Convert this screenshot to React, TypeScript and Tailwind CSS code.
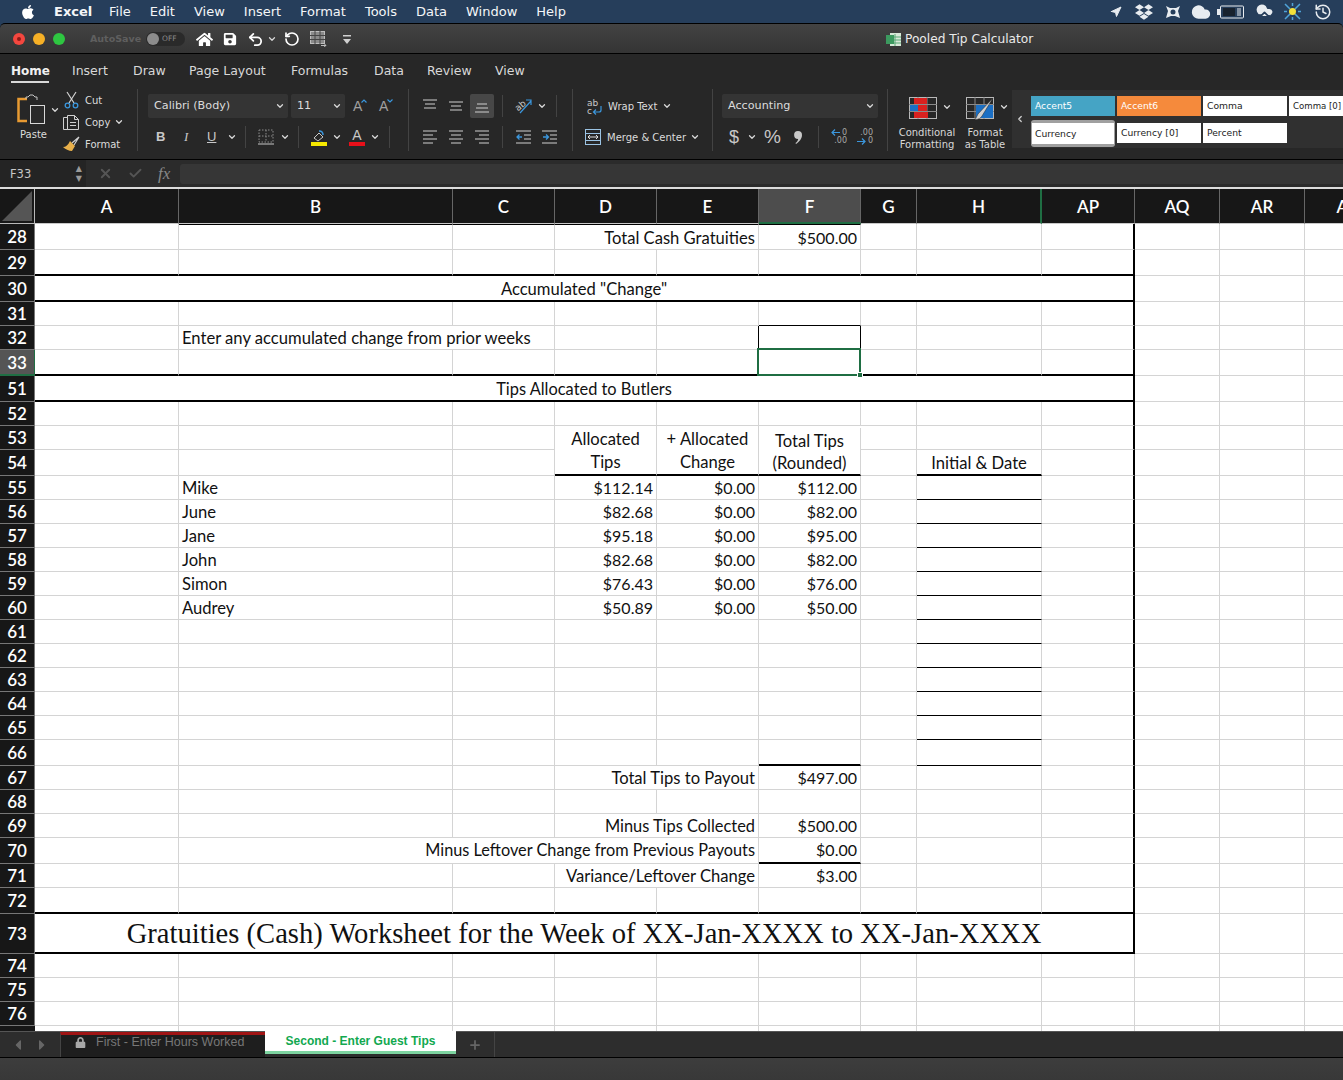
import type { ReactNode } from 'react';
import { twMerge } from 'tailwind-merge';
import { FaApple, FaDropbox, FaHome, FaLock, FaSave, FaCaretLeft, FaCaretRight } from 'react-icons/fa';
import { ChevronDown, ChevronLeft, Plus, Undo2, RotateCcw, X, Check, History, Navigation, Cloud, CloudUpload } from 'lucide-react';

const GRID = 'grid grid-cols-[144px_274px_102px_102px_102px_102px_56px_125px_93px_85px_85px_85px] w-[1390px]';
const LABELS = ['A', 'B', 'C', 'D', 'E', 'F', 'G', 'H', 'AP', 'AQ', 'AR', 'AS'];
const THICK = 'border-b-2 border-b-black';
const THIN = 'border-b border-b-black';
const MONEY = 'justify-end text-[16px] leading-[22px]';

type Cell = { text?: string; span?: number; cls?: string };
type Row = { n: number; h: string; edge?: boolean; cells?: Record<number, Cell> };

const money = (a: string, b: string, c: string, name: string): Record<number, Cell> => ({
  1: { text: name },
  3: { text: a, cls: MONEY },
  4: { text: b, cls: MONEY },
  5: { text: c, cls: MONEY },
  7: { cls: THIN },
});

const rows: Row[] = [
  {
    n: 28, h: 'h-[26px]', cells: {
      1: { cls: 'border-t border-t-black' },
      2: { cls: 'border-t border-t-black' },
      3: { text: 'Total Cash Gratuities', span: 2, cls: 'justify-end border-t border-t-black' },
      5: { text: '$500.00', cls: `${MONEY} border-t border-t-black` },
    },
  },
  { n: 29, h: 'h-[26px]', edge: true },
  { n: 30, h: 'h-[26px]', edge: true, cells: { 0: { text: 'Accumulated "Change"', span: 9, cls: 'justify-center' } } },
  { n: 31, h: 'h-[24px]', cells: { 5: { cls: THIN } } },
  {
    n: 32, h: 'h-[24px]', cells: {
      1: { text: 'Enter any accumulated change from prior weeks', span: 2 },
      4: { cls: 'border-r-black' },
      5: { cls: 'border-r-black' },
    },
  },
  { n: 33, h: 'h-[26px]', edge: true },
  { n: 51, h: 'h-[26px]', edge: true, cells: { 0: { text: 'Tips Allocated to Butlers', span: 9, cls: 'justify-center text-[16.400px] leading-[22px]' } } },
  { n: 52, h: 'h-[24px]' },
  {
    n: 53, h: 'h-[24px]', cells: {
      3: { text: 'Allocated', cls: 'justify-center border-b-0' },
      4: { text: '+ Allocated', cls: 'justify-center border-b-0' },
      5: { text: 'Total Tips', cls: 'justify-center border-b-0 translate-y-[2px]' },
    },
  },
  {
    n: 54, h: 'h-[26px]', cells: {
      3: { text: 'Tips', cls: `justify-center pb-[1px] ${THICK}` },
      4: { text: 'Change', cls: `justify-center pb-[1px] ${THICK}` },
      5: { text: '(Rounded)', cls: `justify-center ${THICK}` },
      7: { text: 'Initial & Date', cls: `justify-center ${THICK}` },
    },
  },
  { n: 55, h: 'h-[24px]', cells: money('$112.14', '$0.00', '$112.00', 'Mike') },
  { n: 56, h: 'h-[24px]', cells: money('$82.68', '$0.00', '$82.00', 'June') },
  { n: 57, h: 'h-[24px]', cells: money('$95.18', '$0.00', '$95.00', 'Jane') },
  { n: 58, h: 'h-[24px]', cells: money('$82.68', '$0.00', '$82.00', 'John') },
  { n: 59, h: 'h-[24px]', cells: money('$76.43', '$0.00', '$76.00', 'Simon') },
  { n: 60, h: 'h-[24px]', cells: money('$50.89', '$0.00', '$50.00', 'Audrey') },
  { n: 61, h: 'h-[24px]', cells: { 7: { cls: THIN } } },
  { n: 62, h: 'h-[24px]', cells: { 7: { cls: THIN } } },
  { n: 63, h: 'h-[24px]', cells: { 7: { cls: THIN } } },
  { n: 64, h: 'h-[24px]', cells: { 7: { cls: THIN } } },
  { n: 65, h: 'h-[24px]', cells: { 7: { cls: THIN } } },
  { n: 66, h: 'h-[26px]', cells: { 5: { cls: THICK }, 7: { cls: THIN } } },
  {
    n: 67, h: 'h-[24px]', cells: {
      3: { text: 'Total Tips to Payout', span: 2, cls: 'justify-end' },
      5: { text: '$497.00', cls: MONEY },
    },
  },
  { n: 68, h: 'h-[24px]' },
  {
    n: 69, h: 'h-[24px]', cells: {
      3: { text: 'Minus Tips Collected', span: 2, cls: 'justify-end text-[16.400px] leading-[22px]' },
      5: { text: '$500.00', cls: MONEY },
    },
  },
  {
    n: 70, h: 'h-[26px]', cells: {
      1: { text: 'Minus Leftover Change from Previous Payouts', span: 4, cls: 'justify-end pb-[2px] text-[16.300px] leading-[22px]' },
      5: { text: '$0.00', cls: `${MONEY} pb-[1px] ${THICK}` },
    },
  },
  {
    n: 71, h: 'h-[24px]', cells: {
      3: { text: 'Variance/Leftover Change', span: 2, cls: 'justify-end' },
      5: { text: '$3.00', cls: MONEY },
    },
  },
  { n: 72, h: 'h-[26px]', edge: true },
  {
    n: 73, h: 'h-[40px]', edge: true, cells: {
      0: {
        text: 'Gratuities (Cash) Worksheet for the Week of XX-Jan-XXXX to XX-Jan-XXXX',
        span: 9,
        cls: "justify-center font-['Liberation_Serif'] text-[28.600px] leading-[36px]",
      },
    },
  },
  { n: 74, h: 'h-[24px]' },
  { n: 75, h: 'h-[24px]' },
  { n: 76, h: 'h-[24px]' },
];

function SheetRow({ row }: { row: Row }) {
  const out = [];
  const active = row.n === 33;
  for (let i = 0; i < 12; i++) {
    const c = row.cells?.[i];
    const span = c?.span ?? 1;
    const last = i + span - 1;
    out.push(
      <div
        key={i}
        className={twMerge(
          "relative flex items-end min-w-0 whitespace-nowrap border-r border-b border-r-[#d4d4d4] border-b-[#d4d4d4] px-[3px] font-['Lato'] text-[16.600px] leading-[22px] text-[#111]",
          span === 2 && 'col-span-2',
          span === 4 && 'col-span-4',
          span === 9 && 'col-span-9',
          row.edge && i < 9 && THICK,
          last === 8 && row.n <= 73 && 'border-r-2 border-r-black',
          c?.cls,
        )}
      >
        <span className={span === 4 ? 'shrink-0' : ''}>{c?.text}</span>
        {/* Selected cell outline with its fill handle */}
        {active && i === 5 && (
          <div className="absolute -left-[2px] -top-[2px] -right-[1px] -bottom-[2px] z-10 border-2 border-[#1f6e43]">
            <div className="absolute -right-[4px] -bottom-[4px] w-[6px] h-[6px] bg-[#1f6e43] border border-white" />
          </div>
        )}
      </div>,
    );
    i = last;
  }
  return (
    <div className={twMerge('flex', row.h)}>
      <div
        className={twMerge(
          "w-[35px] shrink-0 flex items-center justify-center pt-[1px] bg-[#171717] border-b border-r border-b-[#777] border-r-[#777] text-white font-['Lato'] font-semibold text-[17px]",
          active && 'bg-[#555] border-b-2 border-b-[#1f6e43] border-r-[#1f6e43]',
        )}
      >
        {row.n}
      </div>
      <div className={GRID}>{out}</div>
    </div>
  );
}

function Sep({ cls }: { cls?: string }) {
  return <div className={twMerge('w-px bg-[#434343] shrink-0', cls)} />;
}

function Chev({ cls }: { cls?: string }) {
  return <ChevronDown size={10} strokeWidth={3} className={twMerge('text-[#d8d8d8] shrink-0', cls)} />;
}

function Lines({ align, cls }: { align: 'l' | 'c' | 'r'; cls?: string }) {
  const xs: Record<string, string> = {
    l: 'M0 1h14M0 5h10M0 9h14M0 13h10',
    c: 'M0 1h14M2 5h10M0 9h14M2 13h10',
    r: 'M0 1h14M4 5h10M0 9h14M4 13h10',
  };
  return (
    <svg width="14" height="14" viewBox="0 0 14 14" className={cls} fill="none" stroke="#d0d0d0">
      <path d={xs[align]} />
    </svg>
  );
}

function Vert({ pos, cls }: { pos: 't' | 'm' | 'b'; cls?: string }) {
  const d = { t: 'M0 1h14M2 5h10M1 9h12', m: 'M0 3h14M2 7h10M1 11h12', b: 'M2 5h10M1 9h12M0 13h14' }[pos];
  return (
    <svg width="14" height="14" viewBox="0 0 14 14" className={cls} fill="none" stroke="#d0d0d0">
      <path d={d} />
    </svg>
  );
}

function Indent({ flip, cls }: { flip?: boolean; cls?: string }) {
  return (
    <svg width="15" height="14" viewBox="0 0 15 14" className={cls} fill="none">
      <path d="M0 1h15M8 5h7M8 9h7M0 13h15" stroke="#d0d0d0" />
      <path d={flip ? 'M1 7h5M4 4.5L6.5 7 4 9.5' : 'M6 7H1M3.5 4.5L1 7l2.500 2.500'} stroke="#3b97dd" strokeWidth="1.300" />
    </svg>
  );
}

function MenuBar() {
  const items = ['File', 'Edit', 'View', 'Insert', 'Format', 'Tools', 'Data', 'Window', 'Help'];
  return (
    <div className="h-[23px] shrink-0 flex items-center bg-[#263e5b] text-[#f4f6f8] font-['DejaVu_Sans'] text-[13px]">
      <FaApple size={16} className="ml-[20px] text-white" />
      <span className="ml-[18px] font-bold w-[36px]">Excel</span>
      <div className="ml-[19px] flex gap-[19px]">
        {items.map((m) => (
          <span key={m}>{m}</span>
        ))}
      </div>
      <div className="ml-auto flex items-center text-[#e8ecf0]">
        <Navigation size={12} fill="currentColor" />
        <FaDropbox size={18} className="ml-[13px]" />
        <svg width="16" height="16" viewBox="0 0 16 16" className="ml-[12px]" fill="currentColor">
          <path d="M1 2l4 2h6l4-2-2 5 2 7-5-2H6l-5 2 2-7z" />
          <circle cx="8" cy="8" r="2.500" fill="#263e5b" />
        </svg>
        <Cloud size={20} fill="currentColor" className="ml-[10px]" />
        <svg width="27" height="14" viewBox="0 0 27 14" className="ml-[6px]" fill="none">
          <rect x="3.500" y="1" width="23" height="12" rx="1" stroke="currentColor" />
          <rect x="0" y="4" width="3" height="6" fill="currentColor" />
          <rect x="6" y="3" width="12" height="8" fill="#18222e" />
          <path d="M21 3v8M23 3v8" stroke="currentColor" />
        </svg>
        <CloudUpload size={21} fill="currentColor" stroke="#263e5b" className="ml-[10px]" />
        <svg width="17" height="17" viewBox="0 0 17 17" className="ml-[9px]" fill="none">
          <path d="M1 1l5 5M16 1l-5 5M1 16l5-5M16 16l-5-5M8.500 0v3M8.500 14v3M0 8.500h3M14 8.500h3" stroke="#4fa3d8" strokeWidth="1.500" />
          <circle cx="8.500" cy="8.500" r="3.500" fill="#f3e23a" />
        </svg>
        <History size={18} className="ml-[13px] mr-[11px]" />
      </div>
    </div>
  );
}

function TitleBar() {
  return (
    <div className="h-[31px] shrink-0 flex items-center pt-[1px] border-t border-b border-black rounded-t-[5px] bg-gradient-to-b from-[#434343] to-[#343434] font-['DejaVu_Sans']">
      <span className="ml-[13px] w-[12px] h-[12px] rounded-full bg-[#f4473f] flex items-center justify-center">
        <span className="w-[4px] h-[4px] rounded-full bg-[#8e1a16]" />
      </span>
      <span className="ml-[8px] w-[12px] h-[12px] rounded-full bg-[#f6b026]" />
      <span className="ml-[8px] w-[12px] h-[12px] rounded-full bg-[#2ec641]" />
      <span className="ml-[25px] w-[52px] text-[9.500px] font-bold text-[#5f5f5f]">AutoSave</span>
      <span className="ml-[4px] w-[39px] h-[14px] rounded-full bg-[#2a2a2a] flex items-center">
        <span className="ml-[1px] w-[12px] h-[12px] rounded-full bg-[#8c8c8c]" />
        <span className="ml-[3px] text-[7.500px] text-[#8a8a8a]">OFF</span>
      </span>
      <FaHome size={17} className="ml-[11px] text-white" />
      <FaSave size={14} className="ml-[10px] text-white" />
      <Undo2 size={17} strokeWidth={2.500} className="ml-[10px] text-white" />
      <Chev cls="ml-[3px]" />
      <RotateCcw size={16} strokeWidth={2.500} className="ml-[7px] text-white" />
      <svg width="17" height="16" viewBox="0 0 17 16" className="ml-[10px]" fill="none" stroke="#bdbdbd">
        <rect x="0.500" y="0.500" width="14" height="12" fill="#8a8a8a" />
        <path d="M0 4.500h15M0 8.500h15M5 0v13M10 0v13" stroke="#444" />
        <path d="M11 14.500h5M14 12.500l2 2-2 1" />
      </svg>
      <svg width="8" height="9" viewBox="0 0 8 9" className="ml-[16px]" fill="#d0d0d0">
        <rect width="8" height="1.500" />
        <path d="M0 4h8L4 9z" />
      </svg>
      <svg width="15" height="15" viewBox="0 0 15 15" className="ml-[535px]">
        <rect x="4" y="1" width="11" height="13" fill="#d8e8d8" />
        <path d="M5 5h10M5 8h10M5 11h10M9 2v12" stroke="#5aa877" />
        <rect y="3" width="8" height="9" fill="#3c9a5f" />
      </svg>
      <span className="ml-[4px] mt-[1px] text-[12.200px] text-[#eaeaea]">Pooled Tip Calculator</span>
    </div>
  );
}

function ClipboardGroup() {
  return (
    <div className="w-[137px] shrink-0 flex pl-[17px]">
      <div className="w-[46px] shrink-0">
        <div className="flex items-start">
          <svg width="30" height="32" viewBox="0 0 30 32" fill="none" className="mt-[5px]">
            <path d="M10 5H1.500v22H10" stroke="#e89a32" strokeWidth="2.500" />
            <path d="M9 5V3h2l2-2h3l2 2h2v3" stroke="#c4c4c4" />
            <rect x="13.500" y="11.500" width="14" height="18" stroke="#d8d8d8" fill="#2a2a2a" />
          </svg>
          <Chev cls="ml-[3px] mt-[16px]" />
        </div>
        <div className="mt-[1px] ml-[3px] text-[10px] text-[#dcdcdc]">Paste</div>
      </div>
      <div className="flex flex-col text-[10px] text-[#dcdcdc]">
        <div className="h-[22px] shrink-0 flex items-center">
          <svg width="17" height="18" viewBox="0 0 17 18" fill="none">
            <path d="M4 1l7 11M13 1L6 12" stroke="#d0d0d0" strokeWidth="1.200" />
            <circle cx="4.500" cy="14.500" r="2.300" stroke="#3b97dd" strokeWidth="1.300" />
            <circle cx="12.500" cy="14.500" r="2.300" stroke="#3b97dd" strokeWidth="1.300" />
          </svg>
          <span className="ml-[5px]">Cut</span>
        </div>
        <div className="h-[22px] shrink-0 flex items-center">
          <svg width="17" height="17" viewBox="0 0 17 17" fill="none" stroke="#d0d0d0">
            <path d="M5 3.500H.5v12H5" />
            <path d="M4.500 1.500h7l4 4v10h-11zM11.500 1.500v4h4M7 8.500h6M7 11.500h6" fill="#272727" />
          </svg>
          <span className="ml-[5px]">Copy</span>
          <Chev cls="ml-[4px]" />
        </div>
        <div className="h-[22px] shrink-0 flex items-center">
          <svg width="17" height="16" viewBox="0 0 17 16" fill="none">
            <path d="M9 7l7-6M11 9l5-8" stroke="#d0d0d0" strokeWidth="1.200" />
            <path d="M7 5l5 5-3 5c-3 0-7-2-9-4 3 0 5-2 7-6z" fill="#e8b04a" />
          </svg>
          <span className="ml-[5px]">Format</span>
        </div>
      </div>
    </div>
  );
}

function Select({ label, cls }: { label: string; cls: string }) {
  return (
    <div className={twMerge('h-[24px] shrink-0 flex items-center justify-between bg-[#343434] rounded-[2px] pl-[6px] pr-[3px] text-[11.200px] text-[#dcdcdc]', cls)}>
      <span className="pt-[1px]">{label}</span>
      <Chev />
    </div>
  );
}

function GrowA({ up, cls }: { up?: boolean; cls?: string }) {
  return (
    <span className={twMerge("w-[14px] flex items-start font-['Liberation_Sans'] text-[14px] leading-[16px] text-[#a0a0a0]", cls)}>
      A
      <svg width="6" height="4" viewBox="0 0 6 4" fill="none" className="mt-[1px] -ml-[1px] shrink-0">
        <path d={up ? 'M.5 3.500L3 1l2.500 2.500' : 'M.5.5L3 3 5.500.5'} stroke="#3b97dd" strokeWidth="1.200" />
      </svg>
    </span>
  );
}

function FontGroup() {
  return (
    <div className="w-[270px] shrink-0 pl-[10px] pt-[5px]">
      <div className="flex items-center">
        <Select label="Calibri (Body)" cls="w-[140px]" />
        <Select label="11" cls="ml-[3px] w-[54px]" />
        <GrowA up cls="ml-[8px]" />
        <GrowA cls="ml-[12px]" />
      </div>
      <div className="mt-[4px] h-[30px] flex items-center text-[#c8c8c8] text-[13px]">
        <span className="ml-[8px] w-[10px] font-bold font-['Liberation_Sans']">B</span>
        <span className="ml-[18px] w-[6px] italic font-['Liberation_Serif']">I</span>
        <span className="ml-[17px] w-[11px] underline font-['Liberation_Sans']">U</span>
        <Chev cls="ml-[9px]" />
        <Sep cls="ml-[8px] h-[22px]" />
        <svg width="16" height="16" viewBox="0 0 16 16" className="ml-[12px]" fill="none" stroke="#8a8a8a" strokeDasharray="1.500 1.500">
          <path d="M1 1h14v12H1zM8 1v12M1 7h14" />
          <path d="M0 15h16" stroke="#c8c8c8" strokeDasharray="none" />
        </svg>
        <Chev cls="ml-[6px]" />
        <Sep cls="ml-[8px] h-[22px]" />
        <svg width="16" height="17" viewBox="0 0 16 17" className="ml-[12px]" fill="none">
          <path d="M3 9l5-5 4 4-5 4z" stroke="#c8c8c8" />
          <path d="M8 2c3 0 4 2 4 4" stroke="#3b97dd" strokeWidth="1.500" />
          <rect y="13" width="16" height="4" fill="#f5e800" />
        </svg>
        <Chev cls="ml-[5px]" />
        <div className="ml-[7px] w-[16px] flex flex-col items-center">
          <span className="text-[14px] leading-[14px] text-[#c8c8c8] font-['Liberation_Sans']">A</span>
          <span className="w-[16px] h-[4px] bg-[#e8101a]" />
        </div>
        <Chev cls="ml-[5px]" />
        <Sep cls="ml-[9px] h-[22px]" />
      </div>
    </div>
  );
}

function AlignGroup() {
  return (
    <div className="w-[163px] shrink-0 pl-[14px] pt-[5px]">
      <div className="flex items-center h-[24px]">
        <Vert pos="t" />
        <Vert pos="m" cls="ml-[12px]" />
        <div className="ml-[7px] w-[24px] h-[24px] bg-[#474747] rounded-[2px] flex items-center justify-center">
          <Vert pos="b" />
        </div>
        <Sep cls="ml-[8px] h-[22px]" />
        <svg width="18" height="16" viewBox="0 0 18 16" className="ml-[12px] overflow-visible" fill="none">
          <text x="0" y="11" fontSize="9" fill="#c8c8c8" transform="rotate(-40 5 8)">ab</text>
          <path d="M5 15L16 3M11 2h5v5" stroke="#3b97dd" strokeWidth="1.200" />
        </svg>
        <Chev cls="ml-[4px]" />
        <Sep cls="ml-[9px] h-[22px]" />
      </div>
      <div className="mt-[4px] h-[30px] flex items-center">
        <Lines align="l" />
        <Lines align="c" cls="ml-[12px]" />
        <Lines align="r" cls="ml-[12px]" />
        <Sep cls="ml-[13px] h-[22px]" />
        <Indent cls="ml-[13px]" />
        <Indent flip cls="ml-[11px]" />
      </div>
    </div>
  );
}

function WrapGroup() {
  return (
    <div className="w-[139px] shrink-0 pl-[14px] pt-[5px] text-[10px] text-[#dcdcdc]">
      <div className="h-[24px] flex items-center">
        <svg width="16" height="17" viewBox="0 0 16 17" fill="none">
          <text x="0" y="8" fontSize="9" fill="#c8c8c8">ab</text>
          <text x="0" y="16" fontSize="9" fill="#c8c8c8">c</text>
          <path d="M14 8v4q0 2-2 2H7M9 11.500L6.500 14 9 16.500" stroke="#3b97dd" strokeWidth="1.200" />
        </svg>
        <span className="ml-[5px] pt-[1px]">Wrap Text</span>
        <Chev cls="ml-[5px]" />
      </div>
      <div className="mt-[4px] h-[30px] flex items-center -ml-[2px]">
        <svg width="16" height="16" viewBox="0 0 16 16" fill="none">
          <rect x="0.500" y="0.500" width="15" height="15" stroke="#9cc4e4" />
          <path d="M0 4.500h16M0 11.500h16" stroke="#9cc4e4" />
          <path d="M3 8h10M5 6L3 8l2 2M11 6l2 2-2 2" stroke="#e0e0e0" />
        </svg>
        <span className="ml-[6px] pt-[1px]">Merge & Center</span>
        <Chev cls="ml-[4px]" />
      </div>
    </div>
  );
}

function NumberGroup() {
  return (
    <div className="w-[174px] shrink-0 pl-[9px] pt-[5px]">
      <Select label="Accounting" cls="w-[156px]" />
      <div className="mt-[4px] h-[30px] flex items-center text-[#c8c8c8]">
        <span className="ml-[7px] w-[10px] text-[18px] font-['Liberation_Sans']">$</span>
        <Chev cls="ml-[8px]" />
        <span className="ml-[7px] w-[16px] text-[19px] font-['Liberation_Sans']">%</span>
        <svg width="8" height="13" viewBox="0 0 8 13" className="ml-[14px]" fill="#c8c8c8">
          <path d="M4 0a4 4 0 0 1 4 4c0 4-3 7-6 9l-.5-1c1.500-1 2.500-2.500 2.700-4A4 4 0 0 1 4 0z" />
        </svg>
        <Sep cls="ml-[16px] h-[22px]" />
        <div className="ml-[12px] w-[16px] text-[8px] leading-[8px] text-right text-[#a8a8a8] relative">
          0<br />.00
          <svg width="9" height="7" viewBox="0 0 9 7" className="absolute left-0 top-0" fill="none">
            <path d="M9 3.500H1M4 .5L1 3.500l3 3" stroke="#3b97dd" strokeWidth="1.200" />
          </svg>
        </div>
        <div className="ml-[10px] w-[16px] text-[8px] leading-[8px] text-right text-[#a8a8a8] relative">
          .00<br />0
          <svg width="9" height="7" viewBox="0 0 9 7" className="absolute left-0 bottom-0" fill="none">
            <path d="M0 3.500h8M5 .5l3 3-3 3" stroke="#3b97dd" strokeWidth="1.200" />
          </svg>
        </div>
      </div>
    </div>
  );
}

function StyleBox({ label, cls }: { label: string; cls?: string }) {
  return (
    <div className={twMerge('w-[84px] h-[20px] shrink-0 flex items-center pl-[4px] bg-white text-[#222] text-[9.200px]', cls)}>{label}</div>
  );
}

function TableButton({ label1, label2, w, pl, labelCls, children }: { label1: string; label2: string; w: string; pl: string; labelCls?: string; children: ReactNode }) {
  return (
    <div className={twMerge('shrink-0 flex flex-col text-[10px] leading-[12px] text-[#d8d8d8]', w)}>
      <div className={twMerge('h-[38px] flex items-start pt-[8px]', pl)}>
        {children}
        <Chev cls="ml-[5px] mt-[5px]" />
      </div>
      <div className={twMerge('text-center mt-[3px] whitespace-nowrap', labelCls)}>
        {label1}
        <br />
        {label2}
      </div>
    </div>
  );
}

function StylesGroup() {
  return (
    <div className="flex">
      <TableButton label1="Conditional" label2="Formatting" w="w-[78px]" pl="pl-[21px]">
        <svg width="28" height="22" viewBox="0 0 28 22" fill="none" className="shrink-0">
          <rect x="0.500" y="0.500" width="27" height="21" stroke="#b8b8b8" />
          <path d="M0 7.500h28M0 14.500h28M9 0v22M18 0v22" stroke="#8a8a8a" />
          <rect x="5" y="1" width="13" height="6" fill="#d9211f" />
          <rect x="1" y="8" width="8" height="6" fill="#1b6fc4" />
          <rect x="9" y="8" width="9" height="6" fill="#d9211f" />
          <rect x="5" y="15" width="14" height="6" fill="#d9211f" />
        </svg>
      </TableButton>
      <TableButton label1="Format" label2="as Table" w="w-[46px]" pl="pl-[0px]" labelCls="-translate-x-[4px]">
        <svg width="28" height="24" viewBox="0 0 28 24" fill="none" className="shrink-0">
          <rect x="0.500" y="0.500" width="27" height="21" stroke="#b8b8b8" />
          <path d="M0 7.500h28M0 14.500h28M9 0v22M18 0v22" stroke="#8a8a8a" />
          <rect x="10" y="8" width="17" height="13" fill="#1b6fc4" />
          <path d="M27 1L12 17l-3 6c4-1 6-2 7-4z" fill="#d0d0d0" stroke="#222" strokeWidth="0.500" />
        </svg>
      </TableButton>
      <div className="mt-[1px] w-[340px] h-[58px] flex items-center bg-[#303030]">
        <ChevronLeft size={10} strokeWidth={3} className="ml-[3px] text-[#d0d0d0] shrink-0" />
        <div className="ml-[6px] self-start mt-[6px] flex flex-col gap-[7px]">
          <div className="flex gap-[2px]">
            <StyleBox label="Accent5" cls="bg-[#45a4c5] text-white" />
            <StyleBox label="Accent6" cls="bg-[#f58a3c] text-white" />
            <StyleBox label="Comma" />
            <StyleBox label="Comma [0]" cls="whitespace-nowrap text-[8.600px]" />
          </div>
          <div className="flex gap-[2px]">
            <StyleBox label="Currency" cls="h-[27px] -my-[3px] rounded-[3px] border-t-[3px] border-b-[3px] border-x border-[#a0a0a0] pl-[3px]" />
            <StyleBox label="Currency [0]" />
            <StyleBox label="Percent" />
          </div>
        </div>
      </div>
    </div>
  );
}

const TABS: [string, string][] = [
  ['Insert', 'w-[61px]'],
  ['Draw', 'w-[56px]'],
  ['Page Layout', 'w-[102px]'],
  ['Formulas', 'w-[83px]'],
  ['Data', 'w-[53px]'],
  ['Review', 'w-[68px]'],
  ['View', 'w-[40px]'],
];

function Ribbon() {
  return (
    <div className="h-[106px] shrink-0 bg-[#272727] border-b border-black font-['DejaVu_Sans']">
      <div className="h-[35px] flex items-start pt-[8px] pl-[11px] text-[12.500px] text-[#d8d8d8]">
        <span className="w-[61px]">
          <span className="inline-block w-[38px] font-bold text-[12px] leading-[16px] text-[#f0f0f0] border-b-2 border-[#d8d8d8] pb-[2px]">Home</span>
        </span>
        {TABS.map(([t, w]) => (
          <span key={t} className={w}>
            {t}
          </span>
        ))}
      </div>
      <div className="flex h-[62px]">
        <ClipboardGroup />
        <Sep />
        <FontGroup />
        <Sep />
        <AlignGroup />
        <Sep />
        <WrapGroup />
        <Sep />
        <NumberGroup />
        <Sep />
        <StylesGroup />
      </div>
    </div>
  );
}

function FormulaBar() {
  return (
    <div className="h-[29px] shrink-0 flex items-center bg-[#2b2b2b] border-b-2 border-[#dcdcdc]">
      <div className="w-[86px] h-full flex items-center justify-between bg-[#242424] pl-[10px] pr-[4px] text-[11.500px] text-[#c8c8c8] font-['DejaVu_Sans']">
        <span className="pt-[2px]">F33</span>
        <span className="flex flex-col text-[#9a9a9a] text-[8px] leading-[10px]">
          <span>▲</span>
          <span>▼</span>
        </span>
      </div>
      <X size={15} strokeWidth={3} className="ml-[12px] text-[#555]" />
      <Check size={15} strokeWidth={3} className="ml-[15px] text-[#555]" />
      <span className="ml-[15px] w-[20px] italic font-['Liberation_Serif'] text-[17px] text-[#888]">fx</span>
      <div className="ml-[2px] flex-1 h-[20px] bg-[#363636] rounded-l-[3px]" />
    </div>
  );
}

function ColumnHeader() {
  return (
    <div className="flex h-[35px] shrink-0">
      <div className="w-[35px] shrink-0 bg-[#171717] border-r border-b border-[#b8b8b8] p-[2px]">
        <svg width="30" height="30" viewBox="0 0 30 30">
          <polygon points="30,0 30,30 0,30" fill="#555" />
        </svg>
      </div>
      <div className={GRID}>
        {LABELS.map((l) => (
          <div
            key={l}
            className={twMerge(
              "flex items-center justify-center pt-[1px] bg-[#171717] border-r border-b border-r-[#666] border-b-[#c8c8c8] text-white font-['Lato'] font-semibold text-[17px]",
              l === 'F' && 'bg-[#4d4d4d] border-b-2 border-b-[#1f6e43] pt-[2px]',
              l === 'H' && 'border-r-2 border-r-[#1f6e43]',
            )}
          >
            {l}
          </div>
        ))}
      </div>
    </div>
  );
}

function SheetTabs() {
  return (
    <div className="h-[27px] shrink-0 flex bg-[#2d2d2d] border-t border-[#555] border-b border-b-black">
      <div className="w-[60px] shrink-0 flex items-center text-[#666] pl-[10px] gap-[8px]">
        <FaCaretLeft size={16} />
        <FaCaretRight size={16} />
      </div>
      <div className="w-[205px] shrink-0 flex items-center pb-[8px] bg-[#1e1e1e] border-t-[3px] border-t-[#a01414] border-l border-l-[#444] font-['Liberation_Sans'] text-[12.500px] text-[#777]">
        <FaLock size={11} className="ml-[14px] text-[#a8a8a8]" />
        <span className="ml-[10px]">First - Enter Hours Worked</span>
      </div>
      <div className="w-[191px] h-[23px] -mt-px shrink-0 flex items-center justify-center bg-white border-b-[3px] border-b-[#7dd3a0] font-['Liberation_Sans'] font-bold text-[12px] text-[#12a84f]">
        Second - Enter Guest Tips
      </div>
      <div className="w-[39px] shrink-0 flex items-center justify-center border-r border-[#444]">
        <Plus size={14} strokeWidth={3} className="text-[#666]" />
      </div>
    </div>
  );
}

export default function App() {
  return (
    <div className="w-[1343px] h-[1080px] flex flex-col overflow-hidden bg-[#263e5b]">
      <MenuBar />
      <TitleBar />
      <Ribbon />
      <FormulaBar />
      <ColumnHeader />
      <div className="h-[807px] shrink-0 overflow-hidden bg-white">
        {rows.map((r) => (
          <SheetRow key={r.n} row={r} />
        ))}
        <div className="flex h-[5px]">
          <div className="w-[35px] shrink-0 bg-[#171717]" />
          <div className={GRID}>
            {LABELS.map((l) => (
              <div key={l} className="border-r border-[#d4d4d4]" />
            ))}
          </div>
        </div>
      </div>
      <SheetTabs />
      <div className="flex-1 bg-gradient-to-b from-[#3d3d3d] to-[#383838]" />
    </div>
  );
}
